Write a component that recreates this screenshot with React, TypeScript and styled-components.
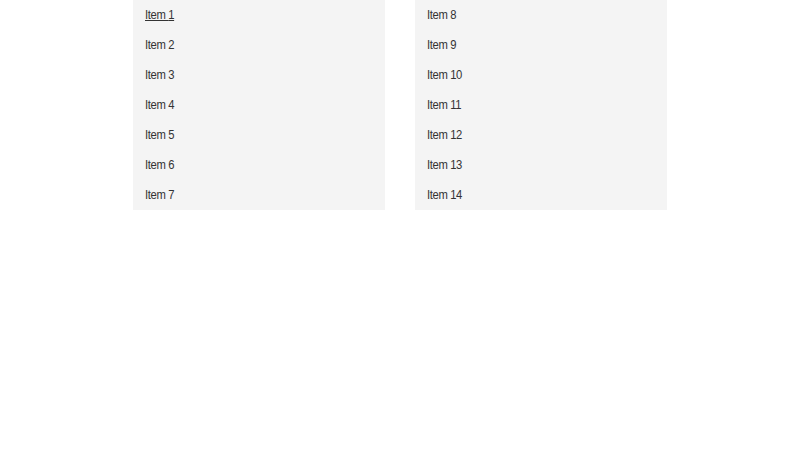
import styled, { createGlobalStyle } from "styled-components";

const GlobalStyle = createGlobalStyle`
  html, body {
    margin: 0;
    padding: 0;
    background: #ffffff;
    font-family: "Liberation Sans", Arial, sans-serif;
  }
`;

const columns = [
  [1, 2, 3, 4, 5, 6, 7],
  [8, 9, 10, 11, 12, 13, 14],
];

const App = () => {
  return (
    <>
      <GlobalStyle />
      <Columns>
        {columns.map((col, i) => (
          <List key={i}>
            {col.map((n) => (
              <Row key={n}>
                <Label active={n === 1}>Item {n}</Label>
              </Row>
            ))}
          </List>
        ))}
      </Columns>
    </>
  );
};

const Columns = styled.div`
  display: flex;
  justify-content: center;
  gap: 30px;
`;

const List = styled.ul`
  list-style: none;
  margin: 0;
  padding: 0;
  width: 252px;
  background-color: #f4f4f4;
`;

const Row = styled.li`
  height: 30px;
  display: flex;
  align-items: center;
  padding: 0 12px;
`;

// the reference face is a bit narrower than Arial, so tighten it slightly
const Label = styled.span<{ active?: boolean }>`
  display: inline-block;
  font-size: 12.5px;
  letter-spacing: -0.4px;
  color: #333333;
  transform: scaleX(0.9);
  transform-origin: left center;
  text-decoration: ${({ active }) => (active ? "underline" : "none")};
`;

export default App;
